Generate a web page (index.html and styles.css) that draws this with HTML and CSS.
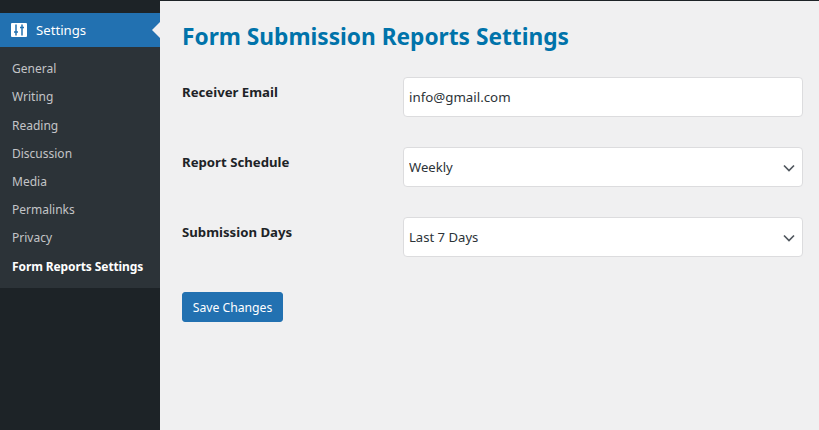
FILE: index.html
```html
<!DOCTYPE html>
<html lang="en">
<head>
<meta charset="utf-8">
<title>Form Submission Reports Settings</title>
<link rel="stylesheet" href="styles.css">
</head>
<body>
<div class="layout">
  <aside class="sidebar">
    <div class="menu-head">
      <svg class="menu-icon" width="16" height="14" viewBox="0 0 16 14"><rect width="16" height="14" rx="1" fill="#fff"/><path d="M5 1.500v11M3 9h4M11 1.500v11M9 4.500h4" stroke="#2271b1" stroke-width="1.500" fill="none"/></svg>
      <span>Settings</span>
    </div>
    <ul class="submenu">
      <li>General</li>
      <li>Writing</li>
      <li>Reading</li>
      <li>Discussion</li>
      <li>Media</li>
      <li>Permalinks</li>
      <li>Privacy</li>
      <li class="current">Form Reports Settings</li>
    </ul>
  </aside>
  <main class="content">
    <h1>Form Submission Reports Settings</h1>
    <form class="form">
      <div class="row">
        <label class="label">Receiver Email</label>
        <input class="field email" type="text" value="info@gmail.com">
      </div>
      <div class="row">
        <label class="label">Report Schedule</label>
        <div class="select-wrap">
          <select class="field"><option>Weekly</option></select>
          <svg class="chevron" width="12" height="8" viewBox="0 0 12 8"><path d="M1 1.500l5 5 5-5" fill="none" stroke="#50575e" stroke-width="1.700"/></svg>
        </div>
      </div>
      <div class="row">
        <label class="label">Submission Days</label>
        <div class="select-wrap">
          <select class="field"><option>Last 7 Days</option></select>
          <svg class="chevron" width="12" height="8" viewBox="0 0 12 8"><path d="M1 1.500l5 5 5-5" fill="none" stroke="#50575e" stroke-width="1.700"/></svg>
        </div>
      </div>
      <button class="save" type="button">Save Changes</button>
    </form>
  </main>
</div>
</body>
</html>
```
FILE: styles.css
```css
* { box-sizing: border-box; }
html, body { margin: 0; height: 100%; overflow: hidden; }
body { font-family: "Noto Sans", "Open Sans", sans-serif; font-size: 13px; background: #f0f0f1; color: #1d2327; }
.layout { display: flex; height: 430px; }
.sidebar { width: 160px; flex: none; background: #1d2327; padding-top: 13px; }
.menu-head { position: relative; height: 34px; background: #2271b1; color: #fff; display: flex; align-items: center; gap: 9px; padding-left: 11px; font-size: 13.200px; }
.menu-head::after { content: ""; position: absolute; right: 0; top: 9px; border: 8px solid transparent; border-right-color: #f0f0f1; border-left-width: 0; }
.menu-icon { flex: none; }
.submenu { list-style: none; margin: 0; padding: 8.070px 0 7.170px; background: #2c3338; color: #c3c4c7; }
.submenu li { height: 28.220px; line-height: 28px; padding-left: 12px; font-size: 12px; white-space: nowrap; }
.submenu .current { color: #fff; font-weight: 700; letter-spacing: -0.100px; }
.content { flex: 1; min-width: 0; border-top: 1px solid #1d2327; padding: 0 16px 0 22px; }
h1 { margin: 19px 0 0; font-size: 22.700px; line-height: 33px; font-weight: 700; color: #0073aa; }
.form { display: flex; flex-direction: column; align-items: flex-start; margin-top: 24px; }
.row { display: flex; width: 100%; height: 40px; margin-bottom: 30px; }
.label { width: 221px; flex: none; font-weight: 700; font-size: 13.200px; line-height: 18px; padding-top: 6px; }
.select-wrap { position: relative; flex: 1; min-width: 0; }
.field { display: block; width: 100%; flex: 1; min-width: 0; height: 40px; padding: 0 5px; background: #fff; border: 1px solid #dcdcde; border-radius: 4px; font: inherit; font-size: 13.100px; color: #2c3338; appearance: none; outline: none; }
.email { font-size: 13.300px; }
.chevron { position: absolute; right: 8px; top: 17px; pointer-events: none; }
.save { margin-top: 5px; height: 30px; width: 101px; padding: 0; background: #2271b1; border: 1px solid #2271b1; border-radius: 3px; color: #fff; font: inherit; font-size: 12.200px; }
```
